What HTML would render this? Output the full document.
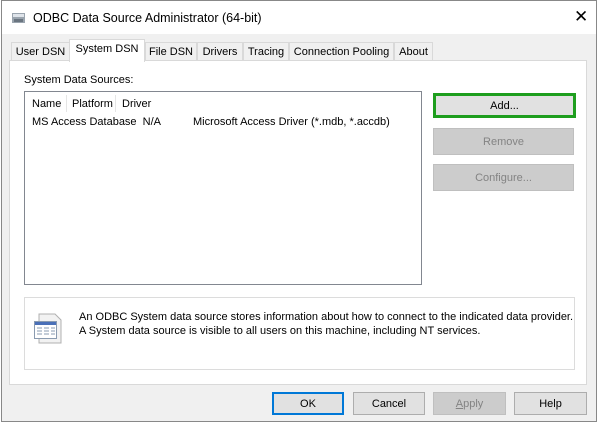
<!DOCTYPE html>
<html><head><style>
*{box-sizing:border-box;margin:0;padding:0}
body{width:600px;height:425px;background:#fff;font-family:"Liberation Sans",sans-serif;font-size:11px;color:#000;position:relative;overflow:hidden}
.win{position:absolute;left:1px;top:0;width:596px;height:422px;border:1px solid #888;background:#f0f0f0}
.title{position:absolute;left:0;top:0;width:594px;height:33px;background:#fff}
.a{position:absolute;white-space:nowrap}
.tab{position:absolute;top:42px;height:19px;border:1px solid #d9d9d9;border-bottom:none;background:#f0f0f0;text-align:center;line-height:18px}
.panel{position:absolute;left:9px;top:60px;width:578px;height:325px;background:#fff;border:1px solid #d9d9d9}
.btn{position:absolute;height:24px;border:1px solid #adadad;background:#e1e1e1;text-align:center;line-height:22px}
.dis{background:#cccccc;border-color:#bfbfbf;color:#838383}
</style></head><body>
<div class="win">
<div class="title">
<svg class="a" style="left:9px;top:10px" width="16" height="14"><rect x="1" y="2" width="13" height="10" fill="#9aa4ae"/><rect x="2" y="3" width="11" height="3" fill="#dfe4ea"/><rect x="3" y="8" width="9" height="3" fill="#6a7580"/></svg>
<div class="a" style="left:31px;top:10px;font-size:12.5px">ODBC Data Source Administrator (64-bit)</div>
<div class="a" style="left:572px;top:6px;font-size:17px;font-weight:300">✕</div>
</div>
</div>
<div class="tab" style="left:11px;width:59px">User DSN</div>
<div class="tab" style="left:69px;width:76px;top:39px;height:23px;background:#fff;z-index:2;line-height:19px">System DSN</div>
<div class="tab" style="left:145px;width:52px">File DSN</div>
<div class="tab" style="left:197px;width:46px">Drivers</div>
<div class="tab" style="left:243px;width:46px">Tracing</div>
<div class="tab" style="left:289px;width:105px">Connection Pooling</div>
<div class="tab" style="left:394px;width:39px">About</div>
<div class="panel"></div>
<div class="a" style="left:24px;top:74px">System Data Sources:</div>
<div class="a" style="left:24px;top:91px;width:398px;height:194px;border:1px solid #828790;background:#fff"></div>
<div class="a" style="left:32px;top:98px">Name</div>
<div class="a" style="left:66px;top:95px;width:1px;height:17px;background:#e5e5e5"></div>
<div class="a" style="left:72px;top:98px">Platform</div>
<div class="a" style="left:115px;top:95px;width:1px;height:17px;background:#e5e5e5"></div>
<div class="a" style="left:122px;top:98px">Driver</div>
<div class="a" style="left:32px;top:116px">MS Access Database&nbsp; N/A</div>
<div class="a" style="left:193px;top:116px">Microsoft Access Driver (*.mdb, *.accdb)</div>
<div class="btn" style="left:433px;top:93px;width:143px;height:25px;border:3px solid #1e9e1e;line-height:20px">Add...</div>
<div class="btn dis" style="left:433px;top:128px;width:141px;height:27px;line-height:26px">Remove</div>
<div class="btn dis" style="left:433px;top:164px;width:141px;height:27px;line-height:26px">Configure...</div>
<div class="a" style="left:24px;top:297px;width:551px;height:73px;border:1px solid #dcdcdc;background:#fff"></div>
<svg class="a" style="left:33px;top:313px" width="32" height="32"><path d="M6 1h16l6 6v23H6z" fill="#f2f2f2" stroke="#b0b0b0"/><rect x="1.5" y="8.5" width="22" height="17" fill="#fff" stroke="#8a9bb0"/><rect x="2" y="9" width="21" height="3" fill="#4a70b8"/><g stroke="#8a9bb0"><path d="M4 15h5M11 15h5M18 15h4M4 18h5M11 18h5M18 18h4M4 21h5M11 21h5M18 21h4"/></g></svg>
<div class="a" style="left:79px;top:310px;line-height:14px">An ODBC System data source stores information about how to connect to the indicated data provider.<br>A System data source is visible to all users on this machine, including NT services.</div>
<div class="btn" style="left:272px;top:392px;width:72px;height:23px;border:2px solid #0078d7;line-height:20px">OK</div>
<div class="btn" style="left:353px;top:392px;width:72px;height:23px;line-height:22px">Cancel</div>
<div class="btn dis" style="left:433px;top:392px;width:73px;height:23px;line-height:22px"><u>A</u>pply</div>
<div class="btn" style="left:514px;top:392px;width:73px;height:23px;line-height:22px">Help</div>
</body></html>
